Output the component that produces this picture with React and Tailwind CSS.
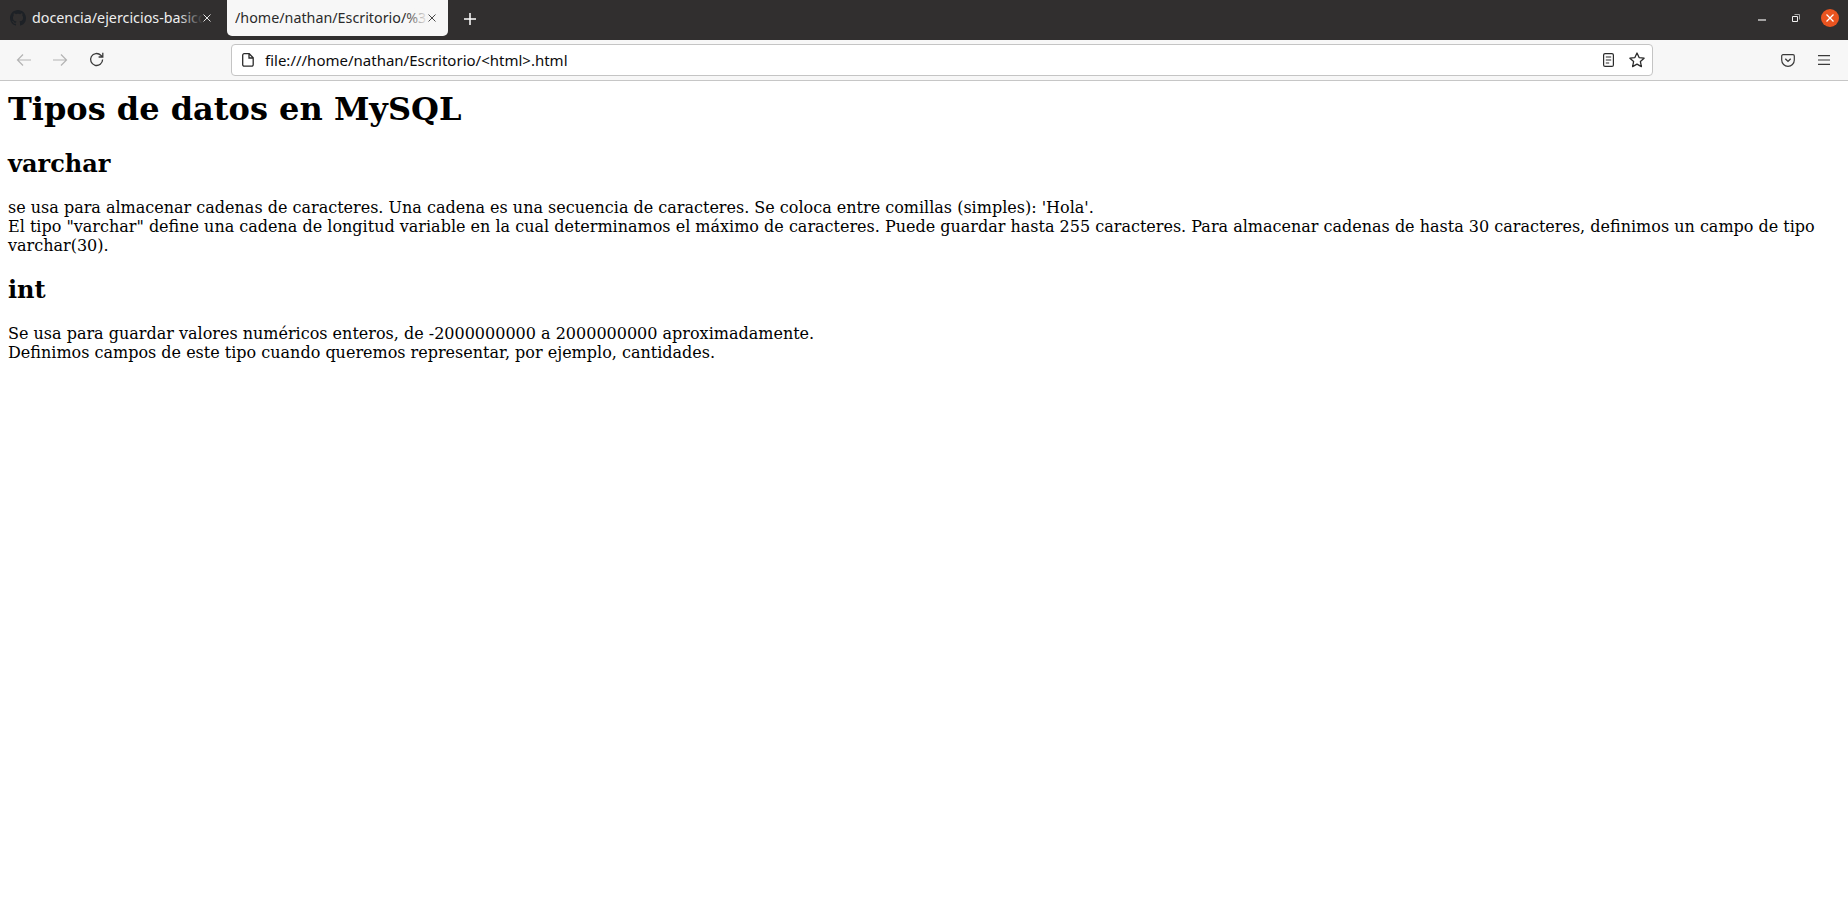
import React from "react";

const ui = "font-['Noto_Sans','Open_Sans',sans-serif]";

function GithubMark() {
  return (
    <svg width="16" height="16" viewBox="0 0 16 16" className="shrink-0" fill="#1d2126">
      <path d="M8 0C3.58 0 0 3.58 0 8c0 3.54 2.29 6.53 5.47 7.59.4.07.55-.17.55-.38 0-.19-.01-.82-.01-1.49-2.01.37-2.53-.49-2.69-.94-.09-.23-.48-.94-.82-1.13-.28-.15-.68-.52-.01-.53.63-.01 1.08.58 1.23.82.72 1.21 1.87.87 2.33.66.07-.52.28-.87.51-1.07-1.78-.2-3.64-.89-3.64-3.95 0-.87.31-1.59.82-2.15-.08-.2-.36-1.02.08-2.12 0 0 .67-.21 2.2.82.64-.18 1.32-.27 2-.27s1.36.09 2 .27c1.53-1.04 2.2-.82 2.2-.82.44 1.1.16 1.92.08 2.12.51.56.82 1.27.82 2.15 0 3.07-1.87 3.75-3.65 3.95.29.25.54.73.54 1.48 0 1.07-.01 1.93-.01 2.2 0 .21.15.46.55.38A8.01 8.01 0 0 0 16 8c0-4.42-3.58-8-8-8z" />
    </svg>
  );
}

function CloseX({ color }) {
  return (
    <svg width="8" height="8" viewBox="0 0 8 8" className="shrink-0" stroke={color} strokeWidth="1" fill="none">
      <path d="M.5 .5l7 7M7.5 .5l-7 7" />
    </svg>
  );
}

export default function App() {
  return (
    <div className="w-[1848px] h-[914px] bg-white flex flex-col overflow-hidden">
      {/* title bar with tabs */}
      <div className={`h-10 bg-[#312f2f] flex items-start shrink-0 ${ui}`}>
        <div className="w-[227px] h-9 pl-[10px] flex items-center">
          <GithubMark />
          <div className="relative ml-[6px] w-[171px] overflow-hidden whitespace-nowrap text-[14.3px] text-[#eeeeee]">
            docencia/ejercicios-basicos-mysql
            <div className="absolute inset-y-0 right-0 w-6 bg-gradient-to-r from-transparent to-[#312f2f]" />
          </div>
          <CloseX color="#e4e4e4" />
        </div>
        <div className="w-[221px] h-9 pl-2 flex items-center bg-[#f7f7f7] rounded-b-[5px]">
          <div className="relative w-[193px] overflow-hidden whitespace-nowrap text-[14.3px] text-[#2b2b2b]">
            /home/nathan/Escritorio/%3Chtml%3E.html
            <div className="absolute inset-y-0 right-0 w-6 bg-gradient-to-r from-transparent to-[#f7f7f7]" />
          </div>
          <CloseX color="#4a4a4a" />
        </div>
        <div className="w-[43px] h-[38px] flex items-center justify-center">
          <svg width="12" height="12" viewBox="0 0 12 12" stroke="#ffffff" strokeWidth="1.5" fill="none">
            <path d="M6 0v12M0 6h12" />
          </svg>
        </div>
        <div className="ml-auto flex items-center h-9 pr-[9px]">
          <svg className="mt-1" width="8" height="2" viewBox="0 0 8 2"><path d="M0 1h8" stroke="#f0f0f0" strokeWidth="1.2" /></svg>
          <svg className="ml-[26px]" width="8" height="8" viewBox="0 0 8 8" fill="none" stroke="#f0f0f0">
            <path d="M.5 2.500h5v5h-5z" strokeWidth="1" />
            <path d="M2.500 .5h5v5" strokeWidth="1" stroke="#a8a8a8" />
          </svg>
          <div className="ml-[21px] w-[18px] h-[18px] rounded-full bg-[#e95420] flex items-center justify-center">
            <svg width="8" height="8" viewBox="0 0 8 8" stroke="#ffffff" strokeWidth="1.3" fill="none"><path d="M.5 .5l7 7M7.500 .5l-7 7" /></svg>
          </div>
        </div>
      </div>

      {/* toolbar */}
      <div className={`h-[41px] bg-[#f7f7f7] border-b border-[#c6c6c6] flex items-center shrink-0 ${ui}`}>
        <div className="w-[231px] flex items-center pl-4 pb-px">
          <svg width="16" height="16" viewBox="0 0 16 16" fill="none" stroke="#b4b4b4" strokeWidth="1.2"><path d="M15 8H1.500M7 2.500L1.500 8 7 13.500" /></svg>
          <svg className="ml-[20px]" width="16" height="16" viewBox="0 0 16 16" fill="none" stroke="#b4b4b4" strokeWidth="1.2"><path d="M1 8h13.500M9 2.500L14.500 8 9 13.500" /></svg>
          <svg className="ml-[21px]" width="15" height="15" viewBox="0 0 15 15" fill="none" stroke="#3a3a3a" strokeWidth="1.3"><path d="M13.600 7.500a6 6 0 1 1-1.800-4.300L13.600 5M13.800 .8V5H9.600" /></svg>
        </div>
        <div className="w-[1422px] h-8 bg-white border border-[#c4c4c4] rounded-[4px] flex items-center pl-[10px] pr-[7px]">
          <svg width="12" height="14" viewBox="0 0 12 14" fill="none" stroke="#2b2b2b" strokeWidth="1.3">
            <path d="M2.200 .7h5l4 4v7a1.500 1.500 0 0 1-1.500 1.500H2.200A1.500 1.500 0 0 1 .7 11.700V2.200A1.500 1.500 0 0 1 2.200 .7zM7 .7v4.300h4.200" />
          </svg>
          <span className="ml-[11px] text-[15px] text-[#0c0c0d] whitespace-nowrap">file:///home/nathan/Escritorio/&lt;html&gt;.html</span>
          <svg className="ml-auto" width="11" height="14" viewBox="0 0 11 14" fill="none" stroke="#2b2b2b" strokeWidth="1.2">
            <rect x=".6" y=".6" width="9.800" height="12.800" rx="1.500" />
            <path d="M2.800 4h5.400M2.800 7h5.400M2.800 10h3.400" />
          </svg>
          <svg className="ml-[15px]" width="16" height="16" viewBox="0 0 16 16" fill="none" stroke="#2b2b2b" strokeWidth="1.300" strokeLinejoin="round">
            <path d="M8 1l2.100 4.600 5 .6-3.700 3.400 1 5L8 12.100 3.600 14.600l1-5L.900 6.200l5-.6z" />
          </svg>
        </div>
        <div className="ml-auto flex items-center pr-[18px]">
          <svg width="14" height="13" viewBox="0 0 14 13" fill="none" stroke="#3a3a3a" strokeWidth="1.2">
            <path d="M2 .7h10a1.300 1.300 0 0 1 1.300 1.300v4a6.300 6.300 0 0 1-12.600 0V2A1.300 1.300 0 0 1 2 .7z" />
            <path d="M4.300 4.800L7 7.400l2.700-2.600" strokeWidth="1.400" />
          </svg>
          <svg className="ml-[23px]" width="12" height="10" viewBox="0 0 12 10" stroke="#3a3a3a" strokeWidth="1.100"><path d="M0 .6h12M0 5h12M0 9.400h12" /></svg>
        </div>
      </div>

      {/* page */}
      <main className="flex-1 px-2 pt-[9px] text-black font-['DejaVu_Serif',serif] text-[16px] leading-[19px]">
        <h1 className="text-[32px] leading-[38px] font-bold">Tipos de datos en MySQL</h1>
        <h2 className="text-[24px] leading-[29px] font-bold mt-[21px]">varchar</h2>
        <p className="mt-5">
          se usa para almacenar cadenas de caracteres. Una cadena es una secuencia de caracteres. Se coloca entre comillas (simples): 'Hola'.
          <br />
          El tipo "varchar" define una cadena de longitud variable en la cual determinamos el máximo de caracteres. Puede guardar hasta 255 caracteres. Para almacenar cadenas de hasta 30 caracteres, definimos un campo de tipo varchar(30).
        </p>
        <h2 className="text-[24px] leading-[29px] font-bold mt-5">int</h2>
        <p className="mt-5">
          Se usa para guardar valores numéricos enteros, de -2000000000 a 2000000000 aproximadamente.
          <br />
          Definimos campos de este tipo cuando queremos representar, por ejemplo, cantidades.
        </p>
      </main>
    </div>
  );
}
